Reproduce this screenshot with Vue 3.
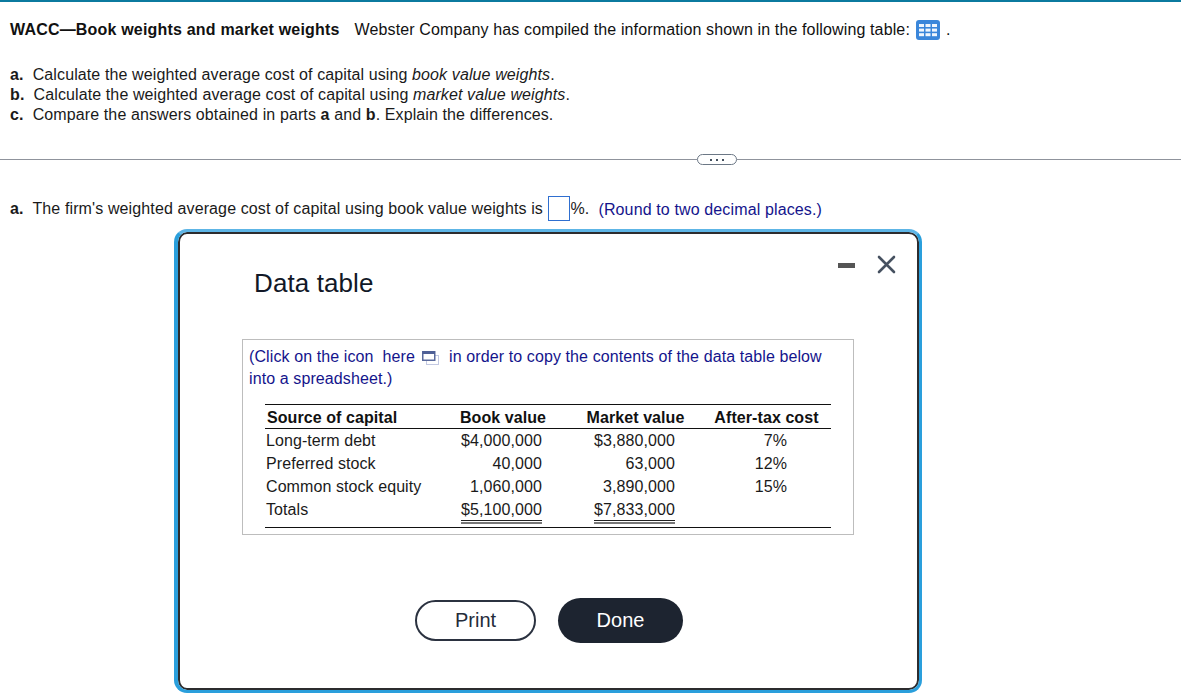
<script setup>
const rows = [
  { source: 'Long-term debt', book: '$4,000,000', market: '$3,880,000', cost: '7%' },
  { source: 'Preferred stock', book: '40,000', market: '63,000', cost: '12%' },
  { source: 'Common stock equity', book: '1,060,000', market: '3,890,000', cost: '15%' }
]
const cols = [0, 1, 2]
const rowsY = [0, 1, 2]
</script>

<template>
  <div class="page">
    <section class="question">
      <p class="heading">
        <strong>WACC—Book weights and market weights</strong>
        <span class="intro">Webster Company has compiled the information shown in the following table:</span>
        <svg class="grid-icon" width="24" height="20" viewBox="0 0 24 20">
          <rect width="24" height="20" rx="3" fill="#3a86da" />
          <template v-for="r in rowsY" :key="r">
            <rect v-for="c in cols" :key="c" :x="3 + c * 6.5" :y="4 + r * 4.6" width="5" height="3" fill="#fff" opacity="0.92" />
          </template>
        </svg>
        <span class="dot">.</span>
      </p>
      <ul class="parts">
        <li><b>a.</b>&nbsp; Calculate the weighted average cost of capital using <i>book value weights</i>.</li>
        <li><b>b.</b>&nbsp; Calculate the weighted average cost of capital using <i>market value weights</i>.</li>
        <li><b>c.</b>&nbsp; Compare the answers obtained in parts <b>a</b> and <b>b</b>. Explain the differences.</li>
      </ul>
    </section>

    <div class="divider">
      <span class="line left"></span>
      <span class="pill"><i></i><i></i><i></i></span>
      <span class="line"></span>
    </div>

    <p class="answer">
      <b>a.</b>&nbsp; The firm's weighted average cost of capital using book value weights is
      <span class="blank"></span><span class="percent">%.</span>
      <span class="hint">(Round to two decimal places.)</span>
    </p>

    <div class="modal">
      <div class="controls">
        <span class="minimize"></span>
        <svg width="19" height="19" viewBox="0 0 19 19">
          <path d="M2 2 L17 17 M17 2 L2 17" stroke="#465160" stroke-width="2.6" stroke-linecap="round" fill="none" />
        </svg>
      </div>
      <h2 class="title">Data table</h2>
      <div class="table-box">
        <p class="copy-note">
          (Click on the icon&nbsp; here
          <svg class="copy-icon" width="17" height="15" viewBox="0 0 17 15">
            <rect x="4.5" y="5.5" width="12" height="9" fill="#fff" stroke="#c3c9e2" />
            <rect x="0.75" y="1.75" width="12" height="8.5" fill="#fff" stroke="#5a6a9c" stroke-width="1.5" />
            <rect x="0.5" y="1" width="12.5" height="3" fill="#4f6096" />
          </svg>
          in order to copy the contents of the data table below<br />into a spreadsheet.)
        </p>
        <table class="data">
          <thead>
            <tr>
              <th class="c-source">Source of capital</th>
              <th class="c-book">Book value</th>
              <th class="c-market">Market value</th>
              <th class="c-cost">After-tax cost</th>
            </tr>
          </thead>
          <tbody>
            <tr v-for="row in rows" :key="row.source">
              <td class="c-source">{{ row.source }}</td>
              <td class="c-book">{{ row.book }}</td>
              <td class="c-market">{{ row.market }}</td>
              <td class="c-cost">{{ row.cost }}</td>
            </tr>
            <tr class="total">
              <td class="c-source">Totals</td>
              <td class="c-book"><span class="double">$5,100,000</span></td>
              <td class="c-market"><span class="double">$7,833,000</span></td>
              <td class="c-cost"></td>
            </tr>
          </tbody>
        </table>
      </div>
      <div class="actions">
        <button class="btn print" type="button">Print</button>
        <button class="btn done" type="button">Done</button>
      </div>
    </div>
  </div>
</template>

<style scoped>
.page {
  position: relative;
  height: 697px;
  overflow: hidden;
  border-top: 2px solid #0b7a9f;
  box-sizing: border-box;
  font-family: "Liberation Sans", Arial, sans-serif;
  font-size: 16px;
  line-height: 20px;
  color: #1a1a1a;
  background: #fff;
}
p, ul { margin: 0; padding: 0; }
.question { padding: 18px 10px 0; }
.heading { display: flex; align-items: center; height: 20px; white-space: nowrap; color: #111; }
.heading strong { letter-spacing: 0.19px; }
.intro { margin-left: 15px; letter-spacing: 0.13px; }
.grid-icon { margin-left: 6px; flex: none; }
.dot { margin-left: 6px; }
.parts { list-style: none; margin-top: 25px; letter-spacing: 0.11px; }
.divider { display: flex; align-items: center; margin-top: 29px; height: 11px; }
.line { flex: 1; height: 1px; background: #8f939c; }
.line.left { flex: none; width: 697px; }
.pill {
  flex: none;
  width: 40px; height: 11px; box-sizing: border-box;
  border: 1.5px solid #6b7785; border-radius: 6px;
  display: flex; align-items: center; justify-content: center; gap: 4px;
}
.pill i { width: 2px; height: 2px; background: #44505e; }
.answer { margin-top: 31px; padding-left: 10px; line-height: 25px; white-space: nowrap; letter-spacing: 0.12px; }
.blank {
  display: inline-block; width: 22px; height: 25px; box-sizing: border-box;
  border: 1px solid #2f6fd0; vertical-align: top;
}
.percent { margin-left: 1px; }
.hint { color: #14148c; margin-left: 9px; letter-spacing: 0.13px; position: relative; top: 1px; }
.modal {
  position: absolute; left: 174px; top: 227px;
  width: 748px; height: 464px; box-sizing: border-box;
  background: #fff;
  border: 3px solid #2a9fdc; border-left-width: 4px;
  border-top-color: #5db5e6;
  border-radius: 13px;
  box-shadow: inset 0 0 0 2px #2c2c2e;
  padding: 0 64px;
}
.controls {
  position: absolute; top: 23px; right: 23px;
  display: flex; align-items: center; gap: 22px;
}
.minimize { width: 17px; height: 5px; background: #555; position: relative; top: 1px; }
.title { margin: 36px 0 0 12px; font-size: 26px; line-height: 30px; font-weight: 400; color: #111827; letter-spacing: 0.1px; }
.table-box {
  margin-top: 41px; width: 612px; height: 196px; box-sizing: border-box;
  border: 1px solid #bdbdbd; padding: 6px 0 0 6px;
}
.copy-note { color: #14148c; line-height: 22px; white-space: nowrap; letter-spacing: 0.1px; }
.copy-icon { vertical-align: -3px; margin: 0 6px 0 2px; }
.data {
  margin: 14px 0 0 16px; width: 566px; table-layout: fixed;
  border-collapse: collapse; border-top: 1px solid #111; border-bottom: 1px solid #111;
  color: #1a1a1a; letter-spacing: 0.08px;
}
.data th {
  height: 24px; padding: 2px 0 0; font-weight: 700; text-align: center; color: #111;
  border-bottom: 1px solid #111; box-sizing: border-box;
}
.data td { height: 23px; padding: 0; line-height: 23px; vertical-align: top; text-align: right; }
.c-source { width: 181px; }
.c-book { width: 114px; }
.c-market { width: 151px; }
.data td.c-source { text-align: left; padding-left: 1px; }
.data th.c-source { text-align: left; padding-left: 2px; }
.data td.c-book { padding-right: 18px; }
.data td.c-market { padding-right: 36px; }
.data td.c-cost { padding-right: 44px; }
.data th.c-cost { padding-right: 9px; }
.total td { height: 29px; }
.double {
  display: inline-block; line-height: 21px; padding-top: 1px; vertical-align: top;
  border-bottom: 1px solid #222;
  box-shadow: 0 1px 0 #fff, 0 3px 0 #777;
}
.actions { display: flex; justify-content: center; align-items: center; gap: 22px; margin: 63px 0 0 1px; width: 612px; }
.btn { font-family: inherit; font-size: 20px; border-radius: 24px; padding: 0; cursor: pointer; }
.print { width: 121px; height: 41px; background: #fff; border: 2px solid #2b3240; color: #252c3a; }
.done { width: 125px; height: 45px; background: #1d2430; border: 0; color: #fff; }
</style>

<style>
html, body { background: #fff; overflow: hidden; }
</style>
